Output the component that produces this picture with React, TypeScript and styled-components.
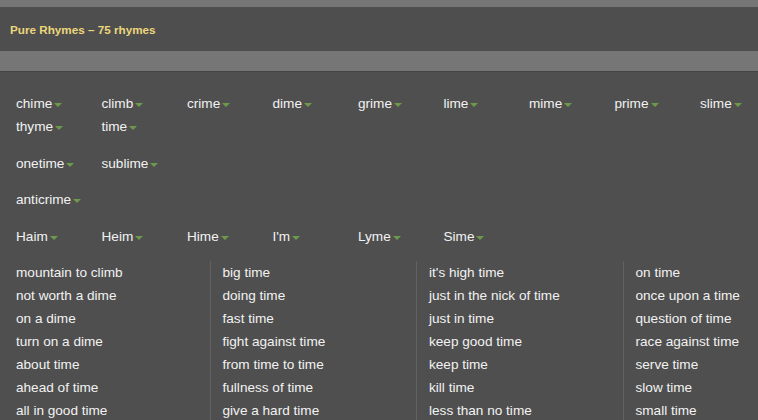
import styled, { createGlobalStyle } from "styled-components";

const GlobalStyle = createGlobalStyle`
  html, body {
    margin: 0;
    padding: 0;
    background: #4f4f4f;
    overflow: hidden;
  }
  body {
    font-family: "Liberation Sans", Arial, Helvetica, sans-serif;
    color: #f2f2f2;
  }
`;

const wordGroups: string[][] = [
  ["chime", "climb", "crime", "dime", "grime", "lime", "mime", "prime", "slime", "thyme", "time"],
  ["onetime", "sublime"],
  ["anticrime"],
  ["Haim", "Heim", "Hime", "I'm", "Lyme", "Sime"],
];

const phraseColumns: string[][] = [
  [
    "mountain to climb",
    "not worth a dime",
    "on a dime",
    "turn on a dime",
    "about time",
    "ahead of time",
    "all in good time",
  ],
  [
    "big time",
    "doing time",
    "fast time",
    "fight against time",
    "from time to time",
    "fullness of time",
    "give a hard time",
  ],
  [
    "it's high time",
    "just in the nick of time",
    "just in time",
    "keep good time",
    "keep time",
    "kill time",
    "less than no time",
  ],
  [
    "on time",
    "once upon a time",
    "question of time",
    "race against time",
    "serve time",
    "slow time",
    "small time",
  ],
];

export default function App() {
  return (
    <>
      <GlobalStyle />
      <Page>
        <TopStrip />
        <Header>
          <Title>Pure Rhymes – 75 rhymes</Title>
        </Header>
        <Band />
        <Body>
          {wordGroups.map((group, i) => (
            <WordGrid key={i}>
              {group.map((w) => (
                <Word key={w}>
                  {w}
                  <Caret />
                </Word>
              ))}
            </WordGrid>
          ))}
          <Phrases>
            {phraseColumns.map((col, i) => (
              <PhraseColumn key={i} $first={i === 0}>
                {col.map((p) => (
                  <Phrase key={p}>{p}</Phrase>
                ))}
              </PhraseColumn>
            ))}
          </Phrases>
        </Body>
      </Page>
    </>
  );
}

const Page = styled.div`
  width: 758px;
  height: 420px;
  overflow: hidden;
  display: flex;
  flex-direction: column;
`;

const TopStrip = styled.div`
  height: 7px;
  background: #767676;
  flex-shrink: 0;
`;

const Header = styled.div`
  height: 44px;
  background: #4e4e4e;
  display: flex;
  align-items: center;
  padding-left: 10px;
  flex-shrink: 0;
`;

const Title = styled.span`
  font-size: 11.7px;
  font-weight: bold;
  color: #ecd67c;
`;

const Band = styled.div`
  height: 20px;
  background: #767676;
  border-bottom: 1px solid #454545;
  flex-shrink: 0;
`;

const Body = styled.div`
  padding: 20px 0 0 16px;
  display: flex;
  flex-direction: column;
  gap: 13.5px;
`;

const WordGrid = styled.div`
  display: grid;
  grid-template-columns: repeat(9, 85.5px);
  width: 770px;
`;

const Word = styled.div`
  font-size: 13.6px;
  line-height: 23px;
  white-space: nowrap;
  color: #f2f2f2;
`;

const Caret = styled.span`
  display: inline-block;
  margin-left: 2px;
  width: 0;
  height: 0;
  border-left: 4.5px solid transparent;
  border-right: 4.5px solid transparent;
  border-top: 4.5px solid #6c9a4c;
  vertical-align: 1px;
`;

const Phrases = styled.div`
  display: flex;
  margin-left: -13px;
`;

const PhraseColumn = styled.div<{ $first: boolean }>`
  width: 206.5px;
  flex-shrink: 0;
  box-sizing: border-box;
  padding-left: ${(p) => (p.$first ? "13px" : "12px")};
  border-left: ${(p) => (p.$first ? "none" : "1px solid #616161")};
`;

const Phrase = styled.div`
  font-size: 13.6px;
  line-height: 23px;
  white-space: nowrap;
  color: #f2f2f2;
`;
